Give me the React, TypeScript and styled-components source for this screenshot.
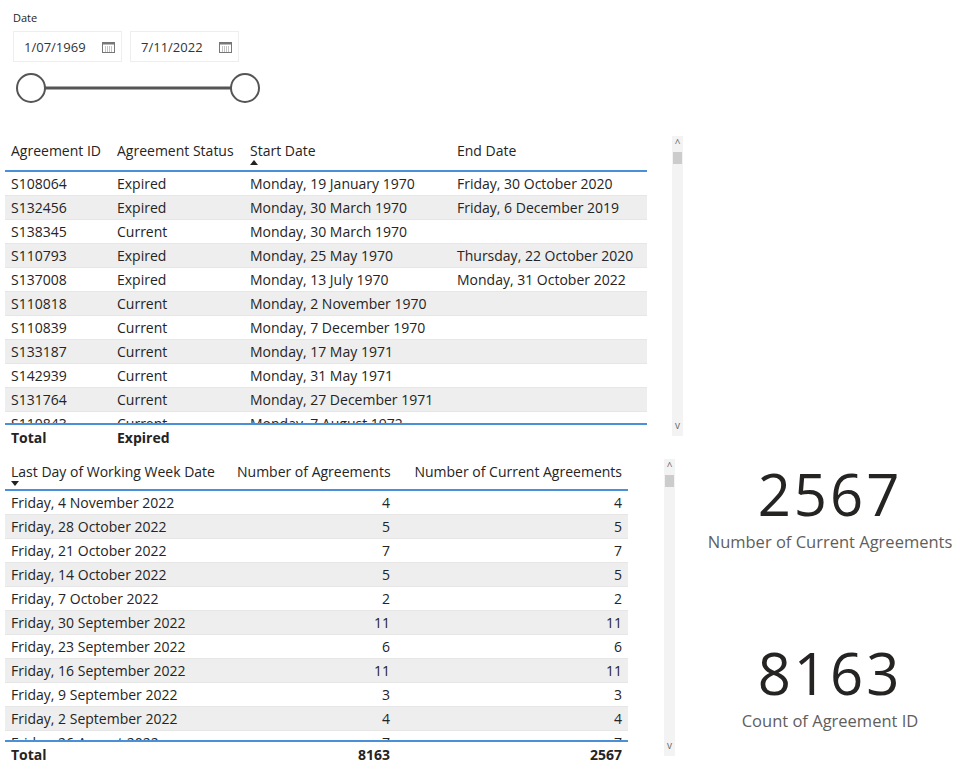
import React from "react";
import styled, { createGlobalStyle } from "styled-components";

const G = createGlobalStyle`
  html,body{margin:0;padding:0;background:#fff;}
  body{font-family:"Open Sans","Noto Sans",sans-serif;color:#252423;}
`;
const Page = styled.div`width:963px;height:769px;overflow:hidden;position:relative;`;
const Filter = styled.div`padding:10px 0 0 13px;height:128px;box-sizing:border-box;`;
const Label = styled.div`font-size:11px;margin-bottom:6px;`;
const Inputs = styled.div`display:flex;gap:8px;`;
const DateBox = styled.div`width:109px;height:31px;box-sizing:border-box;border:1px solid #eee;display:flex;align-items:center;justify-content:space-between;padding:0 6px 0 10px;font-size:13px;color:#333;`;
const Slider = styled.div`margin-top:10px;width:250px;height:32px;`;

const Section = styled.div`display:flex;`;
const TableWrap = styled.div<{ w: number }>`width:${p => p.w}px;margin-left:5px;font-size:14px;`;
const Head = styled.div<{ h: number }>`display:grid;height:${p => p.h}px;border-bottom:2px solid #4a90d9;box-sizing:border-box;`;
const HCell = styled.div<{ r?: boolean }>`padding:3px 6px 0;text-align:${p => (p.r ? "right" : "left")};white-space:nowrap;position:relative;`;
const Arrow = styled.span<{ up?: boolean }>`position:absolute;left:6px;top:22px;width:0;height:0;border-left:4px solid transparent;border-right:4px solid transparent;${p => (p.up ? "border-bottom:5px solid #222;" : "border-top:5px solid #222;")}`;
const Body = styled.div<{ h: number }>`height:${p => p.h}px;overflow:hidden;border-bottom:2px solid #4a90d9;box-sizing:border-box;`;
const Row = styled.div<{ alt: boolean }>`display:grid;height:24px;align-items:center;background:${p => (p.alt ? "#eeeeee" : "#fff")};border-bottom:1px solid #e6e6e6;box-sizing:border-box;`;
const Cell = styled.div<{ r?: boolean; b?: boolean }>`padding:0 6px;white-space:nowrap;overflow:hidden;text-align:${p => (p.r ? "right" : "left")};font-weight:${p => (p.b ? 700 : 400)};`;
const TotalRow = styled.div`display:grid;height:24px;align-items:center;`;
const Scroll = styled.div<{ h: number; ml: number }>`width:11px;height:${p => p.h}px;margin-left:${p => p.ml}px;background:#f3f3f3;display:flex;flex-direction:column;align-items:center;font-size:10px;color:#666;position:relative;`;
const Thumb = styled.div`width:9px;height:12px;background:#ccc;margin-top:2px;`;
const Cards = styled.div`flex:1;display:flex;flex-direction:column;align-items:center;padding-left:22px;`;
const Card = styled.div<{ mt: number }>`margin-top:${p => p.mt}px;text-align:center;`;
const Big = styled.div`font-size:58px;line-height:60px;letter-spacing:3px;color:#252423;`;
const Cap = styled.div`font-size:16.5px;color:#605e5c;white-space:nowrap;margin-top:6px;`;

const cal = (
  <svg width="13" height="12" viewBox="0 0 13 12"><rect x="0.5" y="1.5" width="12" height="10" fill="none" stroke="#777" /><rect x="0.5" y="1.5" width="12" height="2" fill="#777" />{[3, 5, 7, 9].map(x => [6, 8, 10].map(y => <rect key={x + "-" + y} x={x} y={y - 0.5} width="1" height="1" fill="#888" />))}</svg>
);

const t1 = [
  ["S108064", "Expired", "Monday, 19 January 1970", "Friday, 30 October 2020"],
  ["S132456", "Expired", "Monday, 30 March 1970", "Friday, 6 December 2019"],
  ["S138345", "Current", "Monday, 30 March 1970", ""],
  ["S110793", "Expired", "Monday, 25 May 1970", "Thursday, 22 October 2020"],
  ["S137008", "Expired", "Monday, 13 July 1970", "Monday, 31 October 2022"],
  ["S110818", "Current", "Monday, 2 November 1970", ""],
  ["S110839", "Current", "Monday, 7 December 1970", ""],
  ["S133187", "Current", "Monday, 17 May 1971", ""],
  ["S142939", "Current", "Monday, 31 May 1971", ""],
  ["S131764", "Current", "Monday, 27 December 1971", ""],
  ["S110843", "Current", "Monday, 7 August 1972", ""],
];
const t2 = [
  ["Friday, 4 November 2022", "4", "4"],
  ["Friday, 28 October 2022", "5", "5"],
  ["Friday, 21 October 2022", "7", "7"],
  ["Friday, 14 October 2022", "5", "5"],
  ["Friday, 7 October 2022", "2", "2"],
  ["Friday, 30 September 2022", "11", "11"],
  ["Friday, 23 September 2022", "6", "6"],
  ["Friday, 16 September 2022", "11", "11"],
  ["Friday, 9 September 2022", "3", "3"],
  ["Friday, 2 September 2022", "4", "4"],
  ["Friday, 26 August 2022", "7", "7"],
];
const c1 = "106px 133px 207px 1fr";
const c2 = "226px 165px 1fr";

export default function App() {
  return (
    <Page>
      <G />
      <Filter>
        <Label>Date</Label>
        <Inputs>
          <DateBox>1/07/1969 {cal}</DateBox>
          <DateBox>7/11/2022 {cal}</DateBox>
        </Inputs>
        <Slider>
          <svg width="250" height="32"><line x1="32" y1="16" x2="218" y2="16" stroke="#555" strokeWidth="3" /><circle cx="18" cy="16" r="14" fill="#fff" stroke="#555" strokeWidth="2" /><circle cx="232" cy="16" r="14" fill="#fff" stroke="#555" strokeWidth="2" /></svg>
        </Slider>
      </Filter>
      <Section style={{ marginTop: 10 }}>
        <TableWrap w={642}>
          <Head h={34} style={{ gridTemplateColumns: c1 }}>
            <HCell>Agreement ID</HCell><HCell>Agreement Status</HCell><HCell>Start Date<Arrow up /></HCell><HCell>End Date</HCell>
          </Head>
          <Body h={253}>
            {t1.map((r, i) => (
              <Row key={i} alt={i % 2 === 1} style={{ gridTemplateColumns: c1 }}>{r.map((c, j) => <Cell key={j}>{c}</Cell>)}</Row>
            ))}
          </Body>
          <TotalRow style={{ gridTemplateColumns: c1 }}><Cell b>Total</Cell><Cell b>Expired</Cell><Cell /><Cell /></TotalRow>
        </TableWrap>
        <Scroll h={300} ml={25} style={{ marginTop: -2 }}><span>^</span><Thumb /><span style={{ position: "absolute", bottom: 4 }}>v</span></Scroll>
      </Section>
      <Section style={{ marginTop: 10 }}>
        <TableWrap w={623}>
          <Head h={32} style={{ gridTemplateColumns: c2 }}>
            <HCell>Last Day of Working Week Date<Arrow /></HCell><HCell r>Number of Agreements</HCell><HCell r>Number of Current Agreements</HCell>
          </Head>
          <Body h={251}>
            {t2.map((r, i) => (
              <Row key={i} alt={i % 2 === 1} style={{ gridTemplateColumns: c2 }}>{r.map((c, j) => <Cell key={j} r={j > 0}>{c}</Cell>)}</Row>
            ))}
          </Body>
          <TotalRow style={{ gridTemplateColumns: c2 }}><Cell b>Total</Cell><Cell b r>8163</Cell><Cell b r>2567</Cell></TotalRow>
        </TableWrap>
        <Scroll h={297} ml={36}><span>^</span><Thumb /><span style={{ position: "absolute", bottom: 4 }}>v</span></Scroll>
        <Cards>
          <Card mt={5}><Big>2567</Big><Cap>Number of Current Agreements</Cap></Card>
          <Card mt={90}><Big>8163</Big><Cap>Count of Agreement ID</Cap></Card>
        </Cards>
      </Section>
    </Page>
  );
}
